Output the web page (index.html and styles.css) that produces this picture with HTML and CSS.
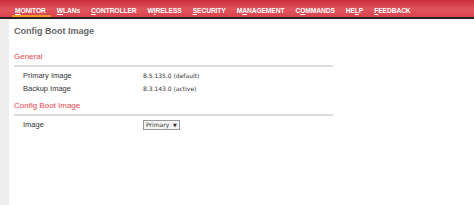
FILE: index.html
```html
<!DOCTYPE html>
<html lang="en">
  <head>
    <meta charset="UTF-8" />
    <title>Config Boot Image</title>
    <link rel="stylesheet" href="styles.css">
  </head>
  <body>
    <div class="topbar">
      <ul class="menu">
        <li class="active"><u>M</u>ONITOR</li>
        <li><u>W</u>LANs</li>
        <li><u>C</u>ONTROLLER</li>
        <li>W<u>I</u>RELESS</li>
        <li><u>S</u>ECURITY</li>
        <li>M<u>A</u>NAGEMENT</li>
        <li>C<u>O</u>MMANDS</li>
        <li>HE<u>L</u>P</li>
        <li><u>F</u>EEDBACK</li>
      </ul>
    </div>

    <div class="page">
      <div class="sidebar"></div>
      <div class="content">
        <h1>Config Boot Image</h1>

        <h2>General</h2>
        <table class="form">
          <tr>
            <td class="label">Primary Image</td>
            <td class="value">8.5.135.0 (default)</td>
          </tr>
          <tr>
            <td class="label">Backup Image</td>
            <td class="value">8.3.143.0 (active)</td>
          </tr>
        </table>

        <h2>Config Boot Image</h2>
        <table class="form">
          <tr>
            <td class="label">Image</td>
            <td class="value">
              <span class="select">Primary <span class="arrow">&#9660;</span></span>
            </td>
          </tr>
        </table>
      </div>
    </div>
  </body>
</html>
```

FILE: styles.css
```css
body {
  margin: 0;
  font-family: "Liberation Sans", Arial, sans-serif;
  background-color: white;
  height: 205px;
  overflow: hidden;
}

.topbar {
  height: 17px;
  background: linear-gradient(#c9303a, #e0545c 55%, #d8444d);
  border-bottom: 2px solid #2a2222;
}

.menu {
  list-style: none;
  margin: 0;
  padding: 0 0 0 12px;
  display: flex;
  height: 17px;
}

.menu li {
  color: white;
  font-size: 6.7px;
  font-weight: bold;
  padding: 7px 5px 0 3px;
  margin-right: 3px;
  letter-spacing: -0.1px;
}

.menu li.active {
  border-bottom: 2px solid #f39a2a;
  height: 8px;
  padding-right: 5px;
}

.page {
  display: flex;
  height: 186px;
}

.sidebar {
  width: 9px;
  background-color: #eeeeee;
}

.content {
  padding-left: 5px;
}

h1 {
  color: #666666;
  font-size: 9px;
  font-weight: bold;
  margin: 7px 0 0 0;
}

h2 {
  color: #e8454e;
  font-size: 8px;
  font-weight: normal;
  margin: 0;
  padding-bottom: 4px;
  width: 319px;
  border-bottom: 2px solid #dddddd;
}

h1 + h2 {
  margin-top: 16px;
}

.form {
  border-collapse: collapse;
  margin: 2px 0 0 0;
}

.form td {
  font-size: 7.5px;
  color: #333333;
  height: 13px;
  padding: 0;
}

.form .label {
  width: 120px;
  padding-left: 9px;
}

.form .value {
  font-family: "DejaVu Sans", Verdana, sans-serif;
  font-size: 6px;
}

.form + h2 {
  margin-top: 6px;
}

.select {
  display: inline-block;
  border: 1px solid #999999;
  background-color: #f4f4f4;
  padding: 0 2px;
  font-size: 6px;
  line-height: 7px;
}

.arrow {
  font-size: 5px;
  margin-left: 2px;
}
```
